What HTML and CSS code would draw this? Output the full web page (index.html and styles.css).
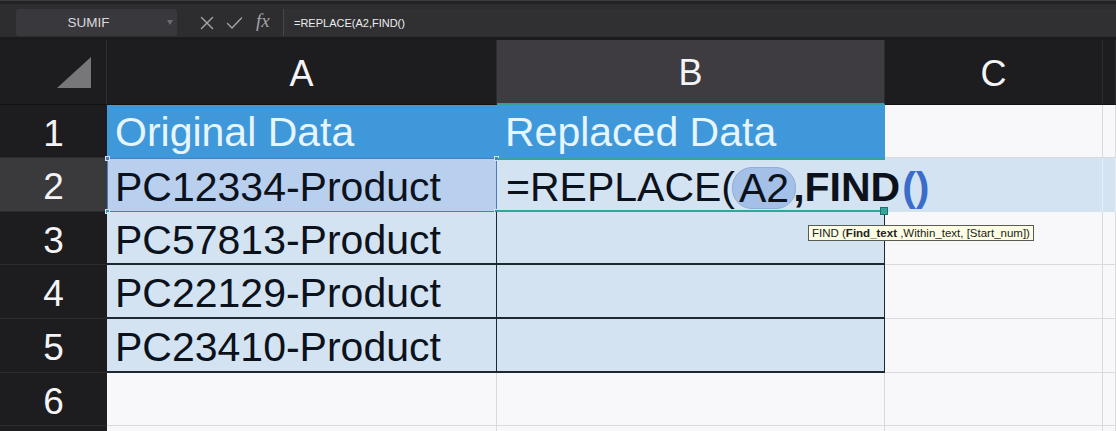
FILE: index.html
```html
<!DOCTYPE html>
<html lang="en">
<head>
    <meta charset="UTF-8">
    <title>REPLACE / FIND</title>
    <link rel="stylesheet" href="styles.css">
</head>
<body>
    <div class="toolbar">
        <div class="name-box">
            <span>SUMIF</span>
            <span class="name-arrow"></span>
        </div>
        <div class="bar-icons">
            <svg width="14" height="14" viewBox="0 0 14 14" fill="none" stroke="currentColor" stroke-width="1.4" stroke-linecap="round">
                <line x1="1.5" y1="1.5" x2="12.5" y2="12.5"></line>
                <line x1="12.5" y1="1.5" x2="1.5" y2="12.5"></line>
            </svg>
            <svg width="17" height="14" viewBox="0 0 17 14" fill="none" stroke="currentColor" stroke-width="1.4" stroke-linecap="round" stroke-linejoin="round">
                <polyline points="1.5 7.5 6 12 15.5 2"></polyline>
            </svg>
            <span class="fx">fx</span>
        </div>
        <div class="formula-box">=REPLACE(A2,FIND()</div>
    </div>

    <div class="sheet">
        <!-- column headers -->
        <div class="corner"><span class="corner-tri"></span></div>
        <div class="col-head">A</div>
        <div class="col-head active">B</div>
        <div class="col-head">C</div>
        <div class="col-head"></div>

        <!-- row 1 -->
        <div class="row-head">1</div>
        <div class="cell title">Original Data</div>
        <div class="cell title">Replaced Data</div>
        <div class="cell"></div>
        <div class="cell"></div>

        <!-- row 2 -->
        <div class="row-head active">2</div>
        <div class="cell selected">PC12334-Product
            <span class="handle tl"></span><span class="handle tr"></span>
            <span class="handle bl"></span><span class="handle br"></span>
        </div>
        <div class="cell editing">=REPLACE(<span class="ref">A2</span><b>,FIND</b><b class="paren">()</b>
            <span class="fill-handle"></span>
        </div>
        <div class="cell row-hl"></div>
        <div class="cell row-hl"></div>

        <!-- row 3 -->
        <div class="row-head">3</div>
        <div class="cell data">PC57813-Product</div>
        <div class="cell data"></div>
        <div class="cell"></div>
        <div class="cell"></div>

        <!-- row 4 -->
        <div class="row-head">4</div>
        <div class="cell data">PC22129-Product</div>
        <div class="cell data"></div>
        <div class="cell"></div>
        <div class="cell"></div>

        <!-- row 5 -->
        <div class="row-head">5</div>
        <div class="cell data">PC23410-Product</div>
        <div class="cell data"></div>
        <div class="cell"></div>
        <div class="cell"></div>

        <!-- row 6 -->
        <div class="row-head">6</div>
        <div class="cell"></div>
        <div class="cell"></div>
        <div class="cell"></div>
        <div class="cell"></div>

        <!-- row 7, only its top edge is in view -->
        <div class="row-head"></div>
        <div class="cell"></div>
        <div class="cell"></div>
        <div class="cell"></div>
        <div class="cell"></div>

        <div class="tooltip">FIND (<b>Find_text</b> ,Within_text, [Start_num])</div>
    </div>
</body>
</html>
```

FILE: styles.css
```css
* {
    margin: 0;
    padding: 0;
    box-sizing: border-box;
}

body {
    background: #1d1c1f;
    font-family: 'Liberation Sans', Arial, sans-serif;
    overflow: hidden;
    height: 431px;
}

/* Formula toolbar */
.toolbar {
    height: 40px;
    display: flex;
    align-items: center;
    padding: 7px 0 0 16px;
    background: #2d2c2f;
    border-top: 1px solid #3c3b3f;
    border-bottom: 3px solid #1b1a1d;
    box-shadow: inset 0 3px 0 #222124;
}

.name-box {
    position: relative;
    width: 161px;
    height: 27px;
    display: flex;
    align-items: center;
    justify-content: center;
    padding-right: 16px;
    background: #39383c;
    border-radius: 3px;
    color: #d9d9db;
    font-size: 13.5px;
}

.name-arrow {
    position: absolute;
    right: 4px;
    top: 11px;
    border-left: 3.5px solid transparent;
    border-right: 3.5px solid transparent;
    border-top: 5px solid #6d6c70;
}

.bar-icons {
    display: flex;
    align-items: center;
    gap: 12px;
    width: 106px;
    padding-left: 23px;
    color: #a4a3a7;
}

.fx {
    font-family: 'Liberation Serif', serif;
    font-style: italic;
    font-size: 19px;
    margin-top: -3px;
    margin-left: 1px;
}

.formula-box {
    flex: 1;
    height: 27px;
    display: flex;
    align-items: center;
    padding-left: 10px;
    background: #303033;
    border-left: 1px solid #47464a;
    color: #ececee;
    font-size: 11px;
}

/* Sheet grid */
.sheet {
    position: relative;
    display: grid;
    grid-template-columns: 107px 390px 388px 218px 1fr;
    grid-template-rows: 65px 53px 54px 53px 54px 54px 53px 53px;
}

.corner {
    position: relative;
    background: #1d1c1f;
    border-right: 1px solid #2f2e31;
    border-bottom: 1px solid #121113;
}

.corner-tri {
    position: absolute;
    left: 57px;
    top: 17px;
    border-left: 34px solid transparent;
    border-bottom: 31px solid #777679;
}

.col-head {
    display: flex;
    align-items: center;
    justify-content: center;
    padding-top: 3px;
    background: #1d1c1f;
    border-right: 1px solid #2c2b2e;
    border-bottom: 1px solid #121113;
    color: #f4f4f6;
    font-size: 36px;
}

.col-head.active {
    background: #3e3c40;
    border-bottom: 2px solid #2ea39d;
}

.row-head {
    display: flex;
    align-items: center;
    justify-content: center;
    padding-top: 5px;
    background: #1d1c1f;
    border-bottom: 1px solid #2c2b2e;
    color: #f4f4f6;
    font-size: 37px;
}

.row-head.active {
    background: #3a393c;
}

.cell {
    position: relative;
    display: flex;
    align-items: center;
    padding: 5px 0 0 8px;
    white-space: nowrap;
    background: #f8f7f9;
    border-right: 1px solid #dad9db;
    border-bottom: 1px solid #dad9db;
    color: #0c121c;
    font-size: 41px;
}

.cell.title {
    padding-top: 2px;
    background: #3f98d9;
    border-right: none;
    border-bottom: none;
    color: #e6f5ff;
}

.cell.data {
    background: #d3e3f1;
    border-right: 1px solid #1e2830;
    border-bottom: 2px solid #1e2830;
}

.cell.row-hl {
    background: #d3e3f1;
    border-right-color: #e9eef4;
    border-bottom-color: #d3e3f1;
}

.cell.selected {
    padding-left: 7px;
    background: #b8cfee;
    border: 1px solid #4b7ec0;
}

/* the cell being edited lets its formula run over the next cells */
.cell.editing {
    z-index: 2;
    padding-left: 9px;
    overflow: visible;
    background: #d3e3f1;
    border-right: none;
    border-top: 2px solid #33a69c;
    border-bottom: 2px solid #33a69c;
}

.ref {
    margin: 0 -3px 0 -3px;
    padding: 0 6px;
    line-height: 40px;
    background: #a4c0e6;
    border: 1px solid #8eaedb;
    border-radius: 20px;
}

.paren {
    color: #3b6cc9;
    margin-left: 2px;
}

.handle {
    position: absolute;
    width: 5px;
    height: 5px;
    background: #4b7ec0;
    border: 1px solid #d6e2f2;
}

.handle.tl { left: -3px; top: -3px; }
.handle.tr { right: -3px; top: -3px; }
.handle.bl { left: -3px; bottom: -3px; background: #3c9aa0; }
.handle.br { right: -3px; bottom: -3px; }

.fill-handle {
    position: absolute;
    left: 383px;
    bottom: -5px;
    width: 8px;
    height: 8px;
    background: #33a69c;
    border: 1px solid #246e6a;
}

.tooltip {
    position: absolute;
    z-index: 3;
    left: 808px;
    top: 185px;
    padding: 0 3px;
    line-height: 14px;
    background: #fdfde4;
    border: 1px solid #5b5b55;
    color: #222;
    font-size: 11.5px;
    white-space: nowrap;
}
```
